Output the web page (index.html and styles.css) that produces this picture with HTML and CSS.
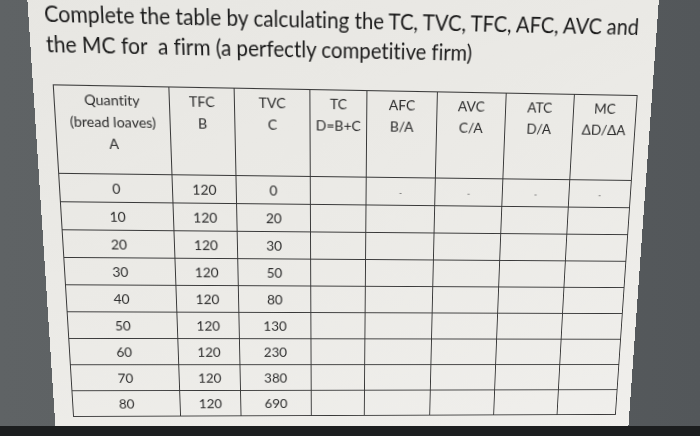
FILE: index.html
```html
<!DOCTYPE html>
<html lang="en">
<head>
<meta charset="utf-8">
<title>Cost table worksheet</title>
<link rel="stylesheet" href="styles.css">
</head>
<body>
<div class="scene">
  <div class="paper">
    <h1 class="title"><span class="line">Complete the table by calculating the TC, TVC, TFC, AFC, AVC and</span><span class="line">the MC for&nbsp; a firm (a perfectly competitive firm)</span></h1>
    <table class="costs">
      <colgroup>
        <col class="c-q"><col class="c-tfc"><col class="c-tvc"><col class="c-tc"><col class="c-afc"><col class="c-avc"><col class="c-atc"><col class="c-mc">
      </colgroup>
      <thead>
        <tr>
          <th>Quantity<br>(bread loaves)<br>A</th>
          <th>TFC<br>B</th>
          <th>TVC<br>C</th>
          <th>TC<br>D=B+C</th>
          <th>AFC<br>B/A</th>
          <th>AVC<br>C/A</th>
          <th>ATC<br>D/A</th>
          <th>MC<br>ΔD/ΔA</th>
        </tr>
      </thead>
      <tbody>
        <tr><td>0</td><td>120</td><td>0</td><td></td><td><span class="dash">-</span></td><td><span class="dash">-</span></td><td><span class="dash">-</span></td><td><span class="dash">-</span></td></tr>
        <tr><td>10</td><td>120</td><td>20</td><td></td><td></td><td></td><td></td><td></td></tr>
        <tr><td>20</td><td>120</td><td>30</td><td></td><td></td><td></td><td></td><td></td></tr>
        <tr><td>30</td><td>120</td><td>50</td><td></td><td></td><td></td><td></td><td></td></tr>
        <tr><td>40</td><td>120</td><td>80</td><td></td><td></td><td></td><td></td><td></td></tr>
        <tr><td>50</td><td>120</td><td>130</td><td></td><td></td><td></td><td></td><td></td></tr>
        <tr><td>60</td><td>120</td><td>230</td><td></td><td></td><td></td><td></td><td></td></tr>
        <tr><td>70</td><td>120</td><td>380</td><td></td><td></td><td></td><td></td><td></td></tr>
        <tr><td>80</td><td>120</td><td>690</td><td></td><td></td><td></td><td></td><td></td></tr>
      </tbody>
    </table>
  </div>
</div>
<div class="bezel"></div>
</body>
</html>
```
FILE: styles.css
```css
html, body {
  margin: 0;
  height: 436px;
  overflow: hidden;
}
body {
  display: flex;
  flex-direction: column;
  background: linear-gradient(90deg, #5f6365 0%, #5a5e60 50%, #53575a 100%);
}
.scene {
  flex: none;
  height: 426px;
  overflow: hidden;
}
.bezel {
  flex: none;
  height: 10px;
  background: #1c1e1f;
}
.paper {
  box-sizing: border-box;
  width: 619px;
  height: 470px;
  padding: 23px 16px 0 15px;
  background: linear-gradient(160deg, #e7e6e2 0%, #ebeae6 45%, #f0efec 100%);
  transform-origin: 0 0;
  transform: matrix3d(1.070476, 0.025511, 0, 0.000070775, 0.079339, 1.109418, 0, 0.00024070, 0, 0, 1, 0, 25.767, -24.984, 0, 1);
  font-family: Lato, "Open Sans", sans-serif;
  font-variant-ligatures: none;
}
.title {
  margin: 0 0 27px 0;
  font-size: 20.2px;
  line-height: 22px;
  font-weight: 400;
  color: #1a1a1a;
  white-space: nowrap;
}
.title .line {
  display: block;
}
.title .line + .line {
  margin-top: 6px;
}
.costs {
  margin-left: 4px;
  width: 584px;
  table-layout: fixed;
  border-collapse: collapse;
  font-size: 14px;
  color: #2c2c2c;
}
.c-q { width: 112px; }
.c-tfc { width: 64px; }
.c-tvc { width: 75px; }
.c-tc { width: 57px; }
.c-afc { width: 71px; }
.c-avc { width: 70px; }
.c-atc { width: 70px; }
.c-mc { width: 65px; }
.costs th,
.costs td {
  border: 1.4px solid #383838;
  padding: 0;
  text-align: center;
}
.costs th {
  height: 85px;
  box-sizing: border-box;
  vertical-align: top;
  padding-top: 2px;
  font-weight: 400;
  line-height: 21px;
}
.costs td {
  height: 28px;
  box-sizing: border-box;
  vertical-align: middle;
  line-height: 16px;
}
.dash {
  font-size: 9px;
  color: #666;
}
```
